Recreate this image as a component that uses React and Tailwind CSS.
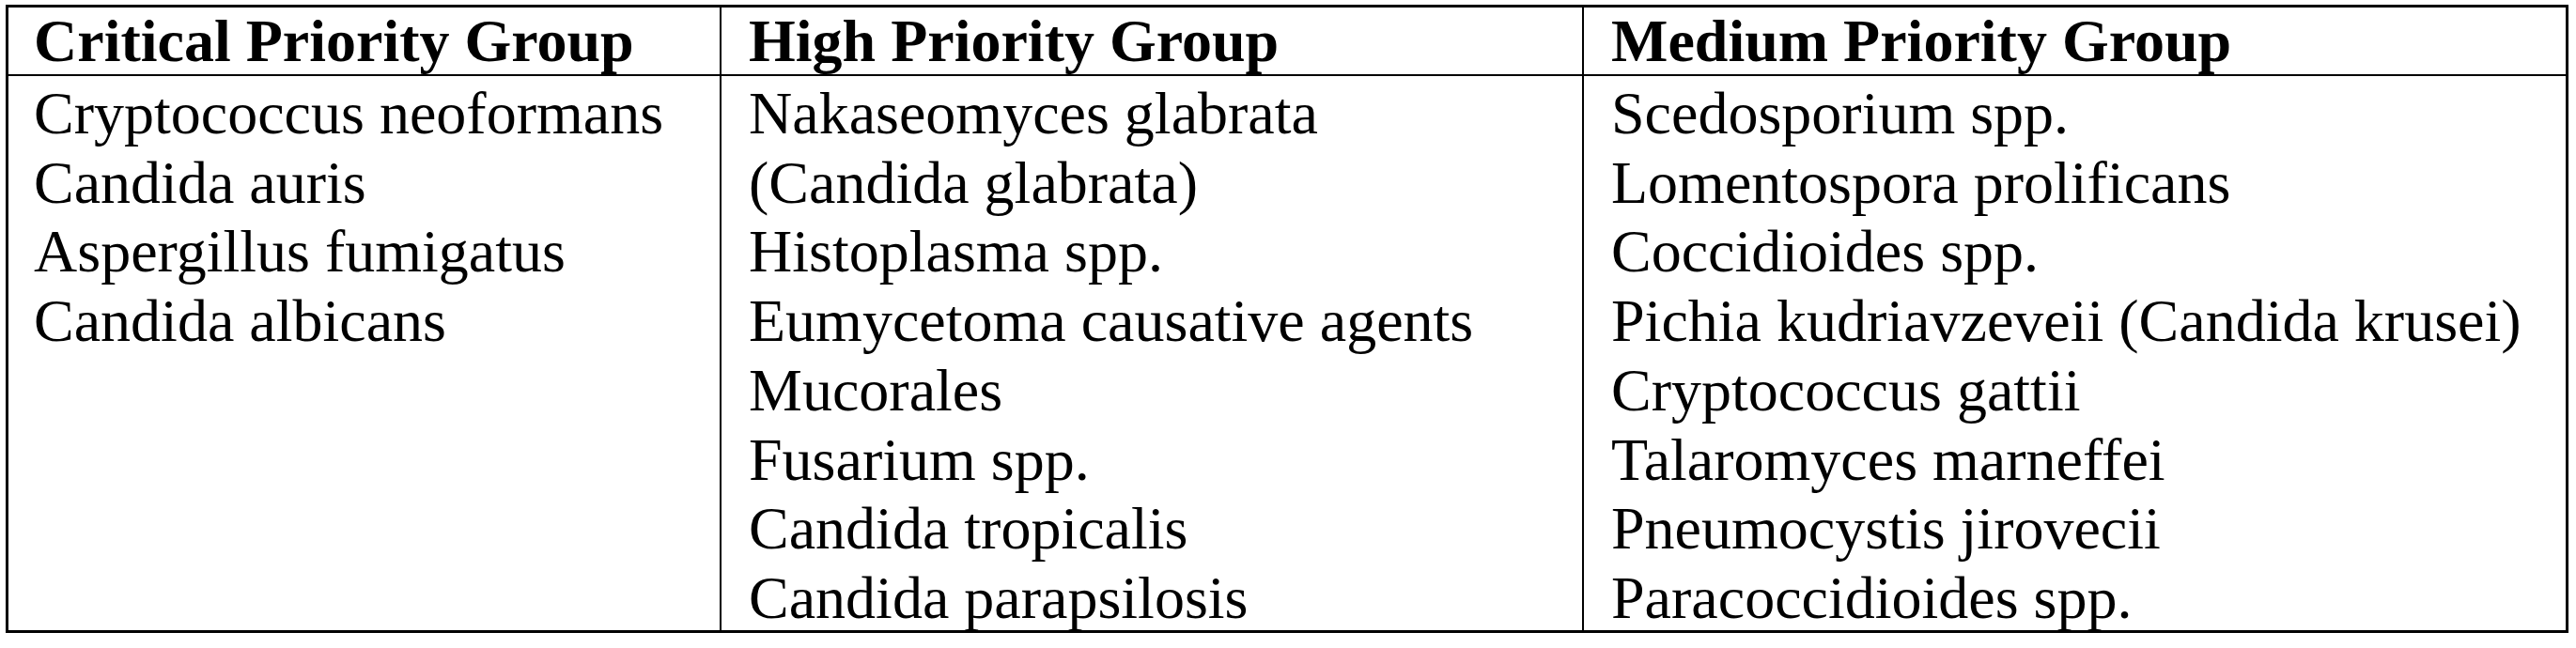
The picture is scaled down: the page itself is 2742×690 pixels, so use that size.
const columns = [
  {
    title: "Critical Priority Group",
    items: ["Cryptococcus neoformans", "Candida auris", "Aspergillus fumigatus", "Candida albicans"],
  },
  {
    title: "High Priority Group",
    items: [
      "Nakaseomyces glabrata",
      "(Candida glabrata)",
      "Histoplasma spp.",
      "Eumycetoma causative agents",
      "Mucorales",
      "Fusarium spp.",
      "Candida tropicalis",
      "Candida parapsilosis",
    ],
  },
  {
    title: "Medium Priority Group",
    items: [
      "Scedosporium spp.",
      "Lomentospora prolificans",
      "Coccidioides spp.",
      "Pichia kudriavzeveii (Candida krusei)",
      "Cryptococcus gattii",
      "Talaromyces marneffei",
      "Pneumocystis jirovecii",
      "Paracoccidioides spp.",
    ],
  },
];

const App = () => {
  return (
    <div className="bg-white w-[2742px] h-[690px] pl-[6px] pt-[5px] font-['Liberation_Serif',serif] text-black">
      <div className="w-[2728px] border-[3px] border-black grid grid-cols-[757px_918px_1fr]">
        {columns.map((col, i) => (
          <div
            key={col.title}
            className={`h-[73px] border-b-2 border-black flex items-center font-bold text-[64px] leading-[71px] ${i === 0 ? "pl-[27px]" : "border-l-2 pl-[29px]"}`}
          >
            {col.title}
          </div>
        ))}
        {columns.map((col, i) => (
          <div
            key={col.title + "-body"}
            className={`h-[590px] pt-[3px] flex flex-col text-[64px] leading-[73.7px] ${i === 0 ? "pl-[27px]" : "border-l-2 border-black pl-[29px]"}`}
          >
            {col.items.map((item) => (
              <div key={item} className="whitespace-nowrap">
                {item}
              </div>
            ))}
          </div>
        ))}
      </div>
    </div>
  );
};

export default App;
